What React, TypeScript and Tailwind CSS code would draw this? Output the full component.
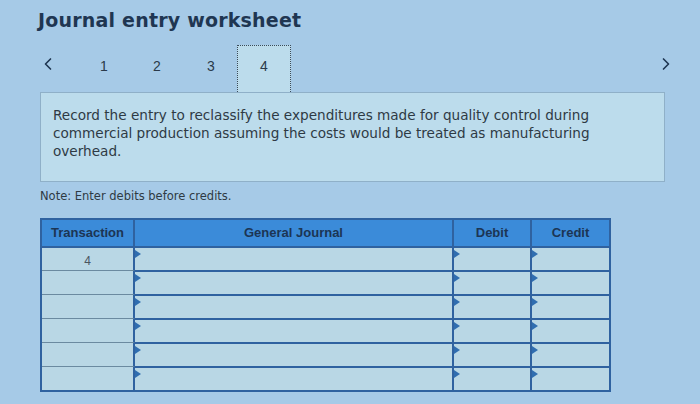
import { ChevronLeft, ChevronRight } from 'lucide-react';

const rows = ['4', '', '', '', '', ''];

const Marker = () => (
  <span className="absolute left-0 top-[2px] w-0 h-0 border-y-[4px] border-y-transparent border-l-[6px] border-l-[#2f6db0]" />
);

export default function App() {
  return (
    <div className="w-[700px] h-[404px] bg-[#a6cae7] overflow-hidden font-['DejaVu_Sans',sans-serif]">
      <div className="pl-[38px] pt-[6px]">
        <h1 className="text-[19px] font-bold text-[#1f3652] tracking-[0.2px]">Journal entry worksheet</h1>
      </div>

      {/* step nav */}
      <div className="flex items-start mt-[10px] h-[47px] pl-[38px] pr-[24px]">
        <div className="flex items-start flex-1 font-['Liberation_Sans',sans-serif] text-[14px] text-[#2a3a4a]">
          <div className="w-[52px] pt-[9px] flex items-center">
            <ChevronLeft className="w-5 h-5 text-[#1f3652]" strokeWidth={2} />
          </div>
          <div className="w-[28px] pt-[11px] text-center">1</div>
          <div className="w-[25px]" />
          <div className="w-[28px] pt-[11px] text-center">2</div>
          <div className="w-[26px]" />
          <div className="w-[28px] pt-[11px] text-center">3</div>
          <div className="w-[12px]" />
          <div className="w-[54px] h-[47px] pt-[10px] text-center bg-[#bcdcec] border border-dotted border-[#3a4a5a] border-b-0">4</div>
        </div>
        <div className="pt-[9px] flex items-center">
          <ChevronRight className="w-5 h-5 text-[#1f3652]" strokeWidth={2} />
        </div>
      </div>

      {/* prompt */}
      <div className="ml-[40px] w-[625px] h-[90px] bg-[#bcdcec] border border-[#8fb0c8] px-[12px] pt-[13px]">
        <p className="text-[13.6px] leading-[18px] text-[#2e3a44]">
          Record the entry to reclassify the expenditures made for quality control during
          <br />
          commercial production assuming the costs would be treated as manufacturing
          <br />
          overhead.
        </p>
      </div>

      <p className="ml-[40px] mt-[6px] text-[11.5px] text-[#2e3a44]">Note: Enter debits before credits.</p>

      {/* journal table */}
      <div className="ml-[40px] mt-[13px] w-[571px] border-2 border-[#2f62a0] font-['Liberation_Sans',sans-serif]">
        <div className="grid grid-cols-[93px_319px_78px_77px] h-[26px] bg-[#3b8bd9] text-[13px] font-bold text-[#1c3554]">
          <div className="flex items-center justify-center border-r-2 border-[#2f62a0]">Transaction</div>
          <div className="flex items-center justify-center border-r-2 border-[#2f62a0]">General Journal</div>
          <div className="flex items-center justify-center border-r-2 border-[#2f62a0]">Debit</div>
          <div className="flex items-center justify-center">Credit</div>
        </div>
        {rows.map((t, i) => (
          <div key={i} className="grid grid-cols-[93px_319px_78px_77px] h-[24px] bg-[#b9d7e5]">
            <div
              className={
                i === 0
                  ? 'flex items-start justify-center pt-[4px] text-[12px] text-[#4a5560] border-r-2 border-t-2 border-[#2f62a0]'
                  : 'border-r-2 border-r-[#2f62a0] border-t border-t-[#6b8aa0]'
              }
            >
              {t}
            </div>
            <div className="relative border-r-2 border-t-2 border-[#2f62a0]">
              <Marker />
            </div>
            <div className="relative border-r-2 border-t-2 border-[#2f62a0]">
              <Marker />
            </div>
            <div className="relative border-t-2 border-[#2f62a0]">
              <Marker />
            </div>
          </div>
        ))}
      </div>
    </div>
  );
}
